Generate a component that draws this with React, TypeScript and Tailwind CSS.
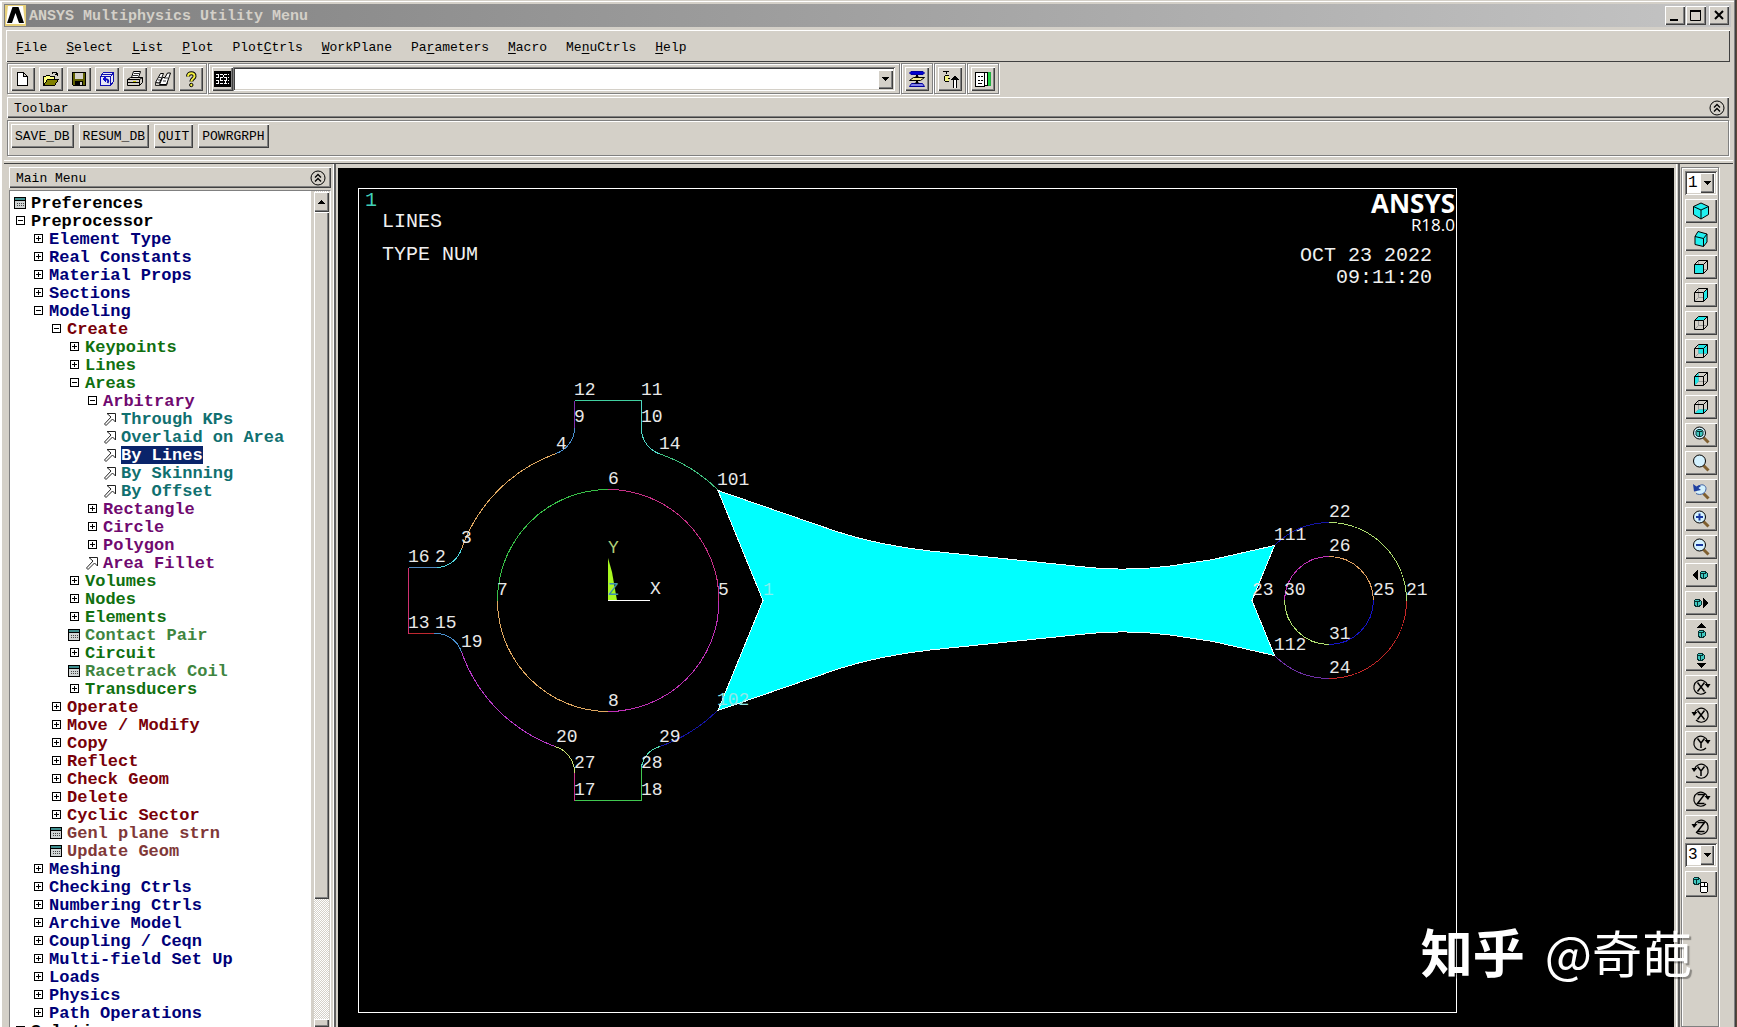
import { useState } from "react";
import type { ReactNode } from "react";

const raised =
  "bg-[#d4d0c8] shadow-[inset_1px_1px_0_#fff,inset_-1px_-1px_0_#404040,inset_-2px_-2px_0_#808080]";
const sunken =
  "bg-white shadow-[inset_1px_1px_0_#808080,inset_-1px_-1px_0_#fff,inset_2px_2px_0_#404040,inset_-2px_-2px_0_#d4d0c8]";
const etched =
  "border border-[#808080] shadow-[inset_1px_1px_0_#fff,1px_1px_0_#fff]";

type Kind = "plus" | "minus" | "form" | "pick";
type Row = [level: number, kind: Kind, label: string];

const tree: Row[] = [
  [0, "form", "Preferences"],
  [0, "minus", "Preprocessor"],
  [1, "plus", "Element Type"],
  [1, "plus", "Real Constants"],
  [1, "plus", "Material Props"],
  [1, "plus", "Sections"],
  [1, "minus", "Modeling"],
  [2, "minus", "Create"],
  [3, "plus", "Keypoints"],
  [3, "plus", "Lines"],
  [3, "minus", "Areas"],
  [4, "minus", "Arbitrary"],
  [5, "pick", "Through KPs"],
  [5, "pick", "Overlaid on Area"],
  [5, "pick", "By Lines"],
  [5, "pick", "By Skinning"],
  [5, "pick", "By Offset"],
  [4, "plus", "Rectangle"],
  [4, "plus", "Circle"],
  [4, "plus", "Polygon"],
  [4, "pick", "Area Fillet"],
  [3, "plus", "Volumes"],
  [3, "plus", "Nodes"],
  [3, "plus", "Elements"],
  [3, "form", "Contact Pair"],
  [3, "plus", "Circuit"],
  [3, "form", "Racetrack Coil"],
  [3, "plus", "Transducers"],
  [2, "plus", "Operate"],
  [2, "plus", "Move / Modify"],
  [2, "plus", "Copy"],
  [2, "plus", "Reflect"],
  [2, "plus", "Check Geom"],
  [2, "plus", "Delete"],
  [2, "plus", "Cyclic Sector"],
  [2, "form", "Genl plane strn"],
  [2, "form", "Update Geom"],
  [1, "plus", "Meshing"],
  [1, "plus", "Checking Ctrls"],
  [1, "plus", "Numbering Ctrls"],
  [1, "plus", "Archive Model"],
  [1, "plus", "Coupling / Ceqn"],
  [1, "plus", "Multi-field Set Up"],
  [1, "plus", "Loads"],
  [1, "plus", "Physics"],
  [1, "plus", "Path Operations"],
  [0, "plus", "Solution"],
];

const indent = ["pl-[3px]", "pl-[21px]", "pl-[39px]", "pl-[57px]", "pl-[75px]", "pl-[93px]"];
const tint = [
  "text-black",
  "text-[#000078]",
  "text-[#780008]",
  "text-[#107010]",
  "text-[#700a70]",
  "text-[#107070]",
];
const dimTint = ["text-black", "text-[#000078]", "text-[#803838]", "text-[#3f8540]"];

const TreeIcon = ({ kind }: { kind: Kind }) => (
  <svg className="w-[14px] h-[14px] shrink-0" viewBox="0 0 14 14" shapeRendering="crispEdges">
    {(kind === "plus" || kind === "minus") && (
      <g stroke="#000" fill="#fff">
        <rect x="3.5" y="2.5" width="8" height="8" />
        <path d={kind === "plus" ? "M5 6.5h5M7.5 4v5" : "M5 6.5h5"} />
      </g>
    )}
    {kind === "form" && (
      <g>
        <rect x="1.5" y="1.5" width="11" height="11" fill="#d0d4d4" stroke="#000" />
        <path d="M2 3h10" stroke="#3f8f8f" strokeWidth="2" />
        <path d="M2 4.5h10" stroke="#000" />
        <path d="M4 7.5h7M4 9.5h7" stroke="#444" strokeDasharray="1 1" />
      </g>
    )}
    {kind === "pick" && (
      <path
        d="M4 1.5h8.5v8.5l-3-3L3 13.5l-1.500-1.500L8 5z"
        fill="#fff"
        stroke="#222"
        shapeRendering="auto"
      />
    )}
  </svg>
);

const Collapse = () => (
  <svg className="w-4 h-4" viewBox="0 0 16 16" fill="none" stroke="#000">
    <circle cx="8" cy="8" r="7" />
    <path d="M5 7.500l3-3 3 3M5 11.500l3-3 3 3" strokeWidth="1.300" />
  </svg>
);

const Ico = ({ children }: { children: ReactNode }) => (
  <svg className="w-5 h-5" viewBox="0 0 20 20" fill="none" stroke="#000" shapeRendering="crispEdges">
    {children}
  </svg>
);

const fileTools: [string, ReactNode][] = [
  ["New", <path d="M4.500 3.500h6l4 4v9h-10zM10.500 3.500v4h4" fill="#fff" />],
  [
    "Open",
    <>
      <path d="M2.500 16V7.500h2l1-1h3l1 1h4v3" fill="#ffff80" />
      <path d="M2.500 16.500l4-6h11l-4 6z" fill="#808000" />
      <path d="M11 4.500l1-1h3l1 1v2M14 5.500h3" />
    </>,
  ],
  [
    "Save",
    <>
      <path d="M3.500 3.500h13v13H4.500l-1-1z" fill="#606000" />
      <rect x="6" y="4" width="8" height="6" fill="#d4d0c8" stroke="none" />
      <rect x="6" y="12" width="8" height="5" fill="#000" stroke="none" />
      <rect x="11" y="13" width="2" height="3" fill="#d4d0c8" stroke="none" />
    </>,
  ],
  [
    "Resume",
    <g stroke="#1010b0">
      <path d="M3.500 7.500l3-4h10v9l-3 4h-10z" fill="#e8e8f4" />
      <path d="M3.500 7.500h10v9M13.500 7.500l3-4M5 5.500h10" />
      <path d="M10.500 14c1.500-2 1-4-3-4" strokeWidth="2" shapeRendering="auto" />
      <path d="M5 10l4-3v6z" fill="#1010d0" stroke="none" />
    </g>,
  ],
  [
    "Print",
    <g shapeRendering="auto">
      <path d="M6.500 8.500l2-6h7l-2 6" fill="#fff" />
      <path d="M9 4.500h5M8 6.500h5" strokeWidth="0.800" />
      <path d="M2.500 10.500l3-2h12v5l-3 3h-12z" fill="#d4d0c8" />
      <path d="M2.500 10.500h12v6M14.500 10.500l3-2M3 13.500h11" />
      <path d="M8 12.500h3" stroke="#c0c000" />
    </g>,
  ],
  [
    "Report",
    <g shapeRendering="auto">
      <path d="M2.500 13.500l5-9h3l-4 9.500z" fill="#fff" />
      <path d="M6.500 15.500l3-7h2.500l2.500-4.500h3l-4 11.500z" fill="#fff" />
      <path d="M6 8.500h2M5 11h2M11 9h4M10 12h3M2.500 14v2.500h11l1-3" strokeWidth="0.800" />
    </g>,
  ],
  [
    "Help",
    <g shapeRendering="auto">
      <path d="M7 7.500C7 3 14 3 13.500 7.500 13.200 9.500 10.300 10 10.300 12.500" strokeWidth="4" />
      <path d="M7 7.500C7 3 14 3 13.500 7.500 13.200 9.500 10.300 10 10.300 12.500" stroke="#f4f040" strokeWidth="2" />
      <circle cx="10.300" cy="16" r="1.700" fill="#f4f040" />
    </g>,
  ],
];

const sideTools: [string, ReactNode][] = [
  [
    "Raise Hidden",
    <g shapeRendering="auto">
      <path d="M4 2.500h12l1.500 1.500-1.500 1.500H4L2.500 4z" fill="#0000d0" stroke="#0000a0" />
      <path d="M2.500 11.500l4-3h11l-4 3z" fill="#f0e890" />
      <path d="M2.500 17.500l2-3h11l2 3z" fill="#8080e8" stroke="#0000a0" />
      <path d="M10 6v2M10 12v2" strokeWidth="2" />
      <path d="M7 9l3-3 3 3zM7 14.500h6l-3-2z" fill="#000" stroke="none" />
    </g>,
  ],
  [
    "Reset Picking",
    <g>
      <path d="M3 2.500h6M6.500 3v2M8.500 6.500h-3l-1 1v4l1 1h3M6.500 9.500h3" fill="#f0f080" />
      <path d="M5 7h3v5H5z" fill="#f0f080" stroke="none" />
      <path d="M15 19V9" strokeWidth="4" />
      <path d="M15 19V10" stroke="#fff" strokeWidth="2" />
      <path d="M15 6l4.500 5h-9z" fill="#000" stroke="none" />
    </g>,
  ],
  [
    "Contact Manager",
    <g>
      <path d="M14.500 3.500h3v13h-3" fill="#20d040" stroke="#20b040" />
      <path d="M11 3.500h3.500v13H11" fill="#fff" />
      <rect x="2.500" y="3.500" width="9" height="14" fill="#fff" />
      <path d="M5 7.500h2M5 11.500h2M8 7.500h2M8 11.500h2M5 14.500h4" />
    </g>,
  ],
];

const miniCube = "M0 2l2-1.500h3L7 2v4L5 7.500H2L0 6z";

const Mini = ({ x, y }: { x: number; y: number }) => (
  <g transform={`translate(${x} ${y})`}>
    <path d={miniCube} fill="#40c8c0" stroke="#063030" />
    <path d="M1 2.500h5M3.500 3v4" stroke="#063030" />
  </g>
);

const cube = (face: string) => (
  <g shapeRendering="auto">
    <path d="M7.500 3.500v9h9M7.500 12.500l-4 4" stroke="#999" />
    <path d={face} fill="#20e8e8" stroke="none" />
    <path d="M3.500 7.500l4-4h9v9l-4 4h-9zM3.500 7.500h9v9M12.500 7.500l4-4" />
  </g>
);

const lens = (inner: ReactNode) => (
  <g shapeRendering="auto">
    <path d="M12.500 12.500l5 5" stroke="#806030" strokeWidth="3" />
    <circle cx="8.500" cy="8" r="6" fill="#d4f2ff" />
    {inner}
  </g>
);

const spin = (axis: string, ccw: boolean) => (
  <g shapeRendering="auto">
    <g transform={ccw ? "translate(20 0) scale(-1 1)" : undefined}>
      <path d="M16.500 8A7 7 0 1 0 15 15" strokeWidth="1.200" />
      <path d="M13.500 7h6l-2.500 4z" fill="#000" stroke="none" />
    </g>
    <path d={axis} strokeWidth="1.500" />
  </g>
);

const axisX = "M6.500 5.500l7 9M13.500 5.500l-7 9";
const axisY = "M6.500 5.500l3.500 4.500 3.500-4.500M10 10v5";
const axisZ = "M6.500 5.500h7l-7 9h7";

const viewTools: [string, ReactNode][] = [
  [
    "Isometric View",
    <g shapeRendering="auto">
      <path d="M2.500 5.500L10 2l7.500 3.500v8L10 18l-7.500-4.500z" fill="#20f0f0" />
      <path d="M2.500 5.500L10 9l7.500-3.500M10 9v9" />
    </g>,
  ],
  [
    "Oblique View",
    <g shapeRendering="auto">
      <path d="M4 7.500l3-5 9 2.500v8l-3.500 4.500-8.500-2z" fill="#20f0f0" />
      <path d="M4 7.500l8.500 2L16 5M12.500 9.500v8" />
    </g>,
  ],
  ["Front View", cube("M3.500 7.500h9v9h-9z")],
  ["Right View", cube("M12.500 7.500l4-4v9l-4 4z")],
  ["Top View", cube("M3.500 7.500l4-4h9l-4 4z")],
  ["Back View", cube("M7.500 3.500h9v9h-9z")],
  ["Left View", cube("M3.500 7.500l4-4v9l-4 4z")],
  ["Bottom View", cube("M3.500 16.500l4-4h9l-4 4z")],
  ["Fit View", lens(<Mini x={5} y={4} />)],
  ["Zoom Model", lens(null)],
  [
    "Back Up",
    <g shapeRendering="auto">
      <path d="M12.500 12.500l5 5" stroke="#806030" strokeWidth="3" />
      <path d="M7 6c3-4 8-2 8 1.500C15 12 10 15 5 12.500" fill="#d4f2ff" stroke="#4060a0" />
      <path d="M2 3l1 7.500L10 9 7.500 7 10 5 8 4 5.500 5.500z" fill="#2040a0" stroke="none" />
    </g>,
  ],
  ["Zoom In", lens(<path d="M5 8h7M8.500 4.500v7" stroke="#1838a0" strokeWidth="2" />)],
  ["Zoom Out", lens(<path d="M5 8h7" stroke="#1838a0" strokeWidth="2" />)],
  ["Pan Left", <><path d="M7 5v10L1 10z" fill="#000" stroke="none" /><Mini x={9} y={6} /></>],
  ["Pan Right", <><path d="M12 5v10l6-5z" fill="#000" stroke="none" /><Mini x={3} y={6} /></>],
  ["Pan Up", <><path d="M5 7h10l-5-5z" fill="#000" stroke="none" /><Mini x={7} y={9} /></>],
  ["Pan Down", <><path d="M5 14h10l-5 5z" fill="#000" stroke="none" /><Mini x={6} y={4} /></>],
  ["Rotate +X", spin(axisX, false)],
  ["Rotate -X", spin(axisX, true)],
  ["Rotate +Y", spin(axisY, false)],
  ["Rotate -Y", spin(axisY, true)],
  ["Rotate +Z", spin(axisZ, false)],
  ["Rotate -Z", spin(axisZ, true)],
];

const menus: [string, string, string][] = [
  ["", "F", "ile"],
  ["", "S", "elect"],
  ["", "L", "ist"],
  ["", "P", "lot"],
  ["Plot", "C", "trls"],
  ["", "W", "orkPlane"],
  ["Pa", "r", "ameters"],
  ["", "M", "acro"],
  ["Me", "n", "uCtrls"],
  ["", "H", "elp"],
];

const Arrow = () => (
  <svg className="w-[7px] h-1" viewBox="0 0 7 4" shapeRendering="crispEdges">
    <path d="M0 0h7L3.500 4z" />
  </svg>
);

const SideSelect = ({ label, value }: { label: string; value: string }) => (
  <div className={`relative w-8 h-6 ${sunken}`}>
    <select
      aria-label={label}
      defaultValue={value}
      className="w-full h-full appearance-none bg-transparent pl-[3px] text-[16px] leading-[24px] outline-none"
    >
      {["1", "2", "3", "4", "5"].map((v) => (
        <option key={v}>{v}</option>
      ))}
    </select>
    <span
      className={`absolute right-[3px] top-[2px] w-[14px] h-5 grid place-items-center pointer-events-none ${raised}`}
    >
      <Arrow />
    </span>
  </div>
);

// colour + path of every model line
const lines: [string, string][] = [
  ["#40d0a0", "M574.5 400.5H641.5"],
  ["#8030b0", "M574.5 400.5V428"],
  ["#4890d0", "M574.5 428A27 27 0 0 1 556 453.500"],
  ["#e0a860", "M556 453.500A156 156 0 0 0 461.500 549"],
  ["#50d8e0", "M461.500 549A27 27 0 0 1 437 567.500"],
  ["#5088c0", "M437 567.500H408.500"],
  ["#d03070", "M408.500 567.500V633.500"],
  ["#c02830", "M408.500 633.500H434"],
  ["#4890d0", "M434 633.500A27 27 0 0 1 461.500 652"],
  ["#b838c8", "M461.500 652A156 156 0 0 0 555 746.500"],
  ["#c8e070", "M555 746.500A27 27 0 0 1 574.500 773"],
  ["#c83088", "M574.500 773V800.500"],
  ["#40c850", "M574.500 800.500H641.500V767"],
  ["#50d8b0", "M641.500 767A25 25 0 0 1 660 746.500"],
  ["#1414a8", "M660 746.500A156 156 0 0 0 718 710"],
  ["#50d8c8", "M641.500 400.500V430A27 27 0 0 0 660 454"],
  ["#40c080", "M660 454A156 156 0 0 1 718 490"],
  ["#c83088", "M608 489.500A111 111 0 0 1 719 600.500"],
  ["#c030b8", "M719 600.500A111 111 0 0 1 608 711.500"],
  ["#e0a860", "M608 711.500A111 111 0 0 1 497.500 600.500"],
  ["#38c048", "M497.500 600.500A111 111 0 0 1 608 489.500"],
  ["#1414a8", "M1274.500 545.500A78 78 0 0 1 1329 522.500"],
  ["#b0e070", "M1329 522.500A78 78 0 0 1 1406.500 600.500"],
  ["#c82828", "M1406.500 600.500A78 78 0 0 1 1329 678.500"],
  ["#7030a8", "M1329 678.500A78 78 0 0 1 1274.500 655.500"],
  ["#c030b8", "M1284.500 600.500A44.500 44.500 0 0 1 1329 556.500"],
  ["#e0a060", "M1329 556.500A44.500 44.500 0 0 1 1373.500 600.500"],
  ["#1414c8", "M1373.500 600.500A44.500 44.500 0 0 1 1329 644.500"],
  ["#b0e070", "M1329 644.500A44.500 44.500 0 0 1 1284.500 600.500"],
];

const labels: [string, number, number][] = [
  ["12", 574, 395],
  ["11", 641, 395],
  ["9", 574, 422],
  ["10", 641, 422],
  ["4", 556, 449],
  ["14", 659, 449],
  ["101", 717, 485],
  ["6", 608, 484],
  ["3", 461, 543],
  ["16", 408, 562],
  ["2", 435, 562],
  ["7", 497, 595],
  ["5", 718, 595],
  ["13", 408, 628],
  ["15", 435, 628],
  ["19", 461, 647],
  ["8", 608, 706],
  ["20", 556, 742],
  ["29", 659, 742],
  ["27", 574, 768],
  ["28", 641, 768],
  ["17", 574, 795],
  ["18", 641, 795],
  ["22", 1329, 517],
  ["26", 1329, 551],
  ["111", 1274, 540],
  ["23", 1252, 595],
  ["30", 1284, 595],
  ["25", 1373, 595],
  ["21", 1406, 595],
  ["31", 1329, 639],
  ["112", 1274, 650],
  ["24", 1329, 673],
];

const Plot = () => (
  <svg
    className="block w-full h-full font-['Liberation_Mono',monospace]"
    viewBox="338 168 1336 859"
    preserveAspectRatio="xMinYMin meet"
  >
    <rect x="358.500" y="188.500" width="1098" height="824" fill="none" stroke="#fff" shapeRendering="crispEdges" />
    <g fill="none" shapeRendering="crispEdges">
      {lines.map(([color, d]) => (
        <path key={d} d={d} stroke={color} />
      ))}
    </g>
    <path
      d="M718 490.500L838 532Q878 545 930 551L1080 566.500Q1124 572 1170 566L1213 559.500 1274.500 545.500 1252 600.500 1274.500 655.500 1213 641.500 1170 635Q1124 629 1080 634.500L930 650Q878 656 838 669L718 710.500 763 600.500z"
      fill="#0ff"
      stroke="#f0ffff"
      shapeRendering="crispEdges"
    />
    <path d="M608 558l4 14 5 28.500h-9z" fill="#a8f820" />
    <path d="M608 600.500h42" stroke="#fff" shapeRendering="crispEdges" />
    <g fill="#e8e8e8" fontSize="18">
      {labels.map(([t, x, y]) => (
        <text key={t} x={x} y={y}>
          {t}
        </text>
      ))}
      <text x="763" y="595" fill="#80f0f0">1</text>
      <text x="717" y="705" fill="#90e8e8">102</text>
      <text x="608" y="553" fill="#b0d078">Y</text>
      <text x="650" y="594">X</text>
      <text x="608" y="595" fill="#4090b0">Z</text>
    </g>
    <g fill="#f0f0f0" fontSize="20">
      <text x="365" y="206" fill="#40d0b8">1</text>
      <text x="382" y="227">LINES</text>
      <text x="382" y="260">TYPE NUM</text>
      <text x="1432" y="261" textAnchor="end">OCT 23 2022</text>
      <text x="1432" y="283" textAnchor="end">09:11:20</text>
    </g>
    <g fill="#fff" textAnchor="end">
      <text x="1455" y="213" className="font-['Open_Sans',sans-serif] font-bold text-[26px]">
        ANSYS
      </text>
      <text x="1455" y="231" className="font-['Open_Sans',sans-serif] text-[17px]">
        R18.0
      </text>
    </g>
  </svg>
);

const App = () => {
  const [command, setCommand] = useState<string>("");
  const [selected, setSelected] = useState<string>("By Lines");

  return (
    <div className="h-screen overflow-hidden bg-[#5c4638] pr-px font-['Liberation_Mono',monospace] text-[13px] text-black">
      <div className="relative h-full flex flex-col bg-[#d4d0c8] pt-1 shadow-[inset_-1px_0_0_#404040,inset_-2px_0_0_#808080,inset_0_1px_0_#d4d0c8,inset_2px_2px_0_#fff]">
        <header className="shrink-0 h-[23px] ml-1 mr-[5px] flex items-center bg-linear-to-r from-[#808080] to-[#c4c4c4] pl-px pr-0.5">
          <svg className="w-[21px] h-[21px]" viewBox="0 0 21 21">
            <rect width="21" height="21" fill="#e8d078" />
            <path d="M3 1h15l2 18H1z" fill="#fff" />
            <path d="M7.500 2h6L19 18h-5L10.500 8 7 18H2z" fill="#000" />
          </svg>
          <h1 className="flex-1 pl-[3px] pt-0.5 text-[15px] leading-[20px] font-bold text-[#d4d0c8]">
            ANSYS Multiphysics Utility Menu
          </h1>
          <button aria-label="Minimize" className={`w-5 h-[19px] ${raised}`}>
            <svg className="w-5 h-[19px]" viewBox="0 0 20 19">
              <path d="M5 14h8" stroke="#000" strokeWidth="2" />
            </svg>
          </button>
          <button aria-label="Maximize" className={`w-5 h-[19px] ml-px ${raised}`}>
            <svg className="w-5 h-[19px]" viewBox="0 0 20 19" fill="none" stroke="#000">
              <path d="M4.500 5v9.500h10V5" />
              <path d="M4 5h11" strokeWidth="2" />
            </svg>
          </button>
          <button aria-label="Close" className={`w-5 h-[19px] ml-[3px] ${raised}`}>
            <svg className="w-5 h-[19px]" viewBox="0 0 20 19">
              <path d="M6 5l8 8M14 5l-8 8" stroke="#000" strokeWidth="2" />
            </svg>
          </button>
        </header>

        <nav className="shrink-0 h-8 mt-[3px] mx-1.5 flex items-center gap-[19px] pl-[10px] pt-1 shadow-[inset_1px_1px_0_#fff,inset_-1px_-1px_0_#404040]">
          {menus.map(([pre, key, post]) => (
            <button key={pre + key + post} className="leading-[20px]">
              {pre}
              <u className="underline-offset-2">{key}</u>
              {post}
            </button>
          ))}
        </nav>

        <div className="shrink-0 flex ml-[7px] mt-px gap-px">
          <div className={`h-[31px] w-[200px] flex gap-1 pl-[3px] pt-[3px] ${etched}`}>
            {fileTools.map(([name, icon]) => (
              <button key={name} aria-label={name} className={`w-6 h-6 grid place-items-center ${raised}`}>
                <Ico>{icon}</Ico>
              </button>
            ))}
          </div>
          <div className={`h-[31px] w-[692px] flex pl-[3px] pt-[3px] pr-1 ${etched}`}>
            <button aria-label="Keyboard" className={`w-[21px] h-6 shrink-0 grid place-items-center ${raised}`}>
              <svg className="w-[17px] h-4" viewBox="0 0 17 16" shapeRendering="crispEdges">
                <rect width="17" height="16" />
                <path
                  d="M2 3.500h13M2 6.500h13M2 9.500h13M2 12.500h13"
                  stroke="#fff"
                  strokeDasharray="3 1"
                />
                <path d="M4.500 4v2M9.500 4v2M12.500 7v2M6.500 7v2M4.500 10v2M11.500 10v2" stroke="#fff" />
              </svg>
            </button>
            <div className={`flex-1 h-6 flex items-center p-0.5 ${sunken}`}>
              <input
                aria-label="Command"
                value={command}
                onChange={(e) => setCommand(e.target.value)}
                className="flex-1 h-5 px-1 bg-transparent outline-none"
              />
              <button aria-label="History" className={`w-[15px] h-[19px] grid place-items-center ${raised}`}>
                <Arrow />
              </button>
            </div>
          </div>
          {sideTools.map(([name, icon]) => (
            <div key={name} className={`h-[31px] w-8 pl-[3px] pt-[3px] ${etched}`}>
              <button aria-label={name} className={`w-6 h-6 grid place-items-center ${raised}`}>
                <Ico>{icon}</Ico>
              </button>
            </div>
          ))}
        </div>

        <div className={`shrink-0 h-[21px] mt-[3px] mx-[7px] flex items-center justify-between pl-[7px] pr-[4px] ${raised}`}>
          <h2 className="pt-0.5 leading-[20px]">Toolbar</h2>
          <button aria-label="Collapse toolbar">
            <Collapse />
          </button>
        </div>
        <div className={`shrink-0 h-[36px] mt-0.5 mx-[7px] flex gap-[5px] pl-[3px] pt-[3px] ${etched}`}>
          {["SAVE_DB", "RESUM_DB", "QUIT", "POWRGRPH"].map((t) => (
            <button key={t} className={`h-6 px-1 pt-0.5 ${raised}`}>
              {t}
            </button>
          ))}
        </div>

        <div className="shrink-0 h-1 mt-1 ml-1 mr-[3px] border-t border-white border-b border-b-[#404040]" />

        <main className="flex-1 min-h-0 flex pl-[9px]">
          <aside className="w-[322px] shrink-0 flex flex-col pt-[3px]">
            <div className={`shrink-0 h-[21px] flex items-center justify-between pl-[7px] pr-[5px] ${raised}`}>
              <h2 className="pt-0.5 leading-[20px]">Main Menu</h2>
              <button aria-label="Collapse menu">
                <Collapse />
              </button>
            </div>
            <div className="flex-1 min-h-0 mt-0.5 flex border-l border-t border-[#808080] border-r border-r-white">
              <ul className="flex-1 overflow-hidden bg-white pt-[3px]">
                {tree.map(([level, kind, label]) => {
                  const color = kind === "form" ? dimTint[level] : tint[level];
                  return (
                    <li key={label} className={`h-[18px] flex items-center gap-[4px] ${indent[level]}`}>
                      <TreeIcon kind={kind} />
                      <button
                        onClick={() => setSelected(label)}
                        className={`h-[18px] text-[17px] leading-[20px] font-bold whitespace-nowrap ${
                          selected === label ? "bg-[#0a246a] text-white" : color
                        }`}
                      >
                        {label}
                      </button>
                    </li>
                  );
                })}
              </ul>
              <div className="w-[19px] flex pl-[3px] pr-px">
                <div className="flex-1 flex flex-col bg-[repeating-conic-gradient(#fff_0_25%,#d4d0c8_0_50%)] bg-size-[2px_2px]">
                  <button aria-label="Scroll up" className={`h-5 mt-px shrink-0 grid place-items-center ${raised}`}>
                    <span className="rotate-180">
                      <Arrow />
                    </span>
                  </button>
                  <div className={`h-[687px] shrink ${raised}`} />
                  <div className="flex-1" />
                  <button aria-label="Scroll down" className={`h-[8px] shrink-0 ${raised}`} />
                </div>
              </div>
            </div>
          </aside>

          <div className="w-[7px] shrink-0 flex pl-0.5">
            <div className="w-[3px] border-l border-white border-r-2 border-r-[#606060]" />
          </div>

          <section className="flex-1 min-w-0 mt-1 bg-black">
            <Plot />
          </section>

          <div className="w-[7px] shrink-0 flex pl-0.5">
            <div className="w-[4px] border-l border-white border-r-2 border-r-[#606060]" />
          </div>
          <aside className={`w-[38px] shrink-0 mt-[3px] mr-[17px] flex flex-col items-start gap-1 pl-[3px] pt-[3px] ${etched}`}>
            <SideSelect label="Window" value="1" />
            {viewTools.map(([name, icon]) => (
              <button key={name} aria-label={name} className={`w-8 h-6 grid place-items-center ${raised}`}>
                <Ico>{icon}</Ico>
              </button>
            ))}
            <SideSelect label="Rate" value="3" />
            <button aria-label="Dynamic Mode" className={`w-8 h-[26px] grid place-items-center ${raised}`}>
              <Ico>
                <Mini x={2} y={3} />
                <path d="M9.500 9.500l1-1h5l1 1v8l-1 1h-5l-1-1zM9.500 12.500h7M13 8.500v4" fill="#fff" />
              </Ico>
            </button>
          </aside>
        </main>

        <p
          lang="zh"
          className="absolute right-[44px] bottom-[40px] flex items-center gap-[20px] text-white font-['Noto_Sans_CJK_SC',sans-serif] leading-[72px] whitespace-nowrap pointer-events-none [text-shadow:2px_2px_1px_rgba(0,0,0,0.35)]"
        >
          <span className="text-[52px] font-bold">知乎</span>
          <span className="text-[50px]">@奇葩</span>
        </p>
      </div>
    </div>
  );
};

export default App;
